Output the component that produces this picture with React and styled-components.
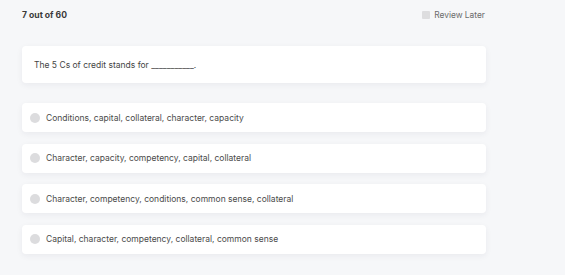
import React from "react";
import styled, { createGlobalStyle } from "styled-components";

const Global = createGlobalStyle`
  html, body { margin: 0; padding: 0; background: #f6f7f9; }
  body { font-family: Inter, "Noto Sans", Arial, sans-serif; -webkit-font-smoothing: antialiased; }
`;

const Page = styled.div`
  width: 464px;
  padding: 10px 0 20px 22px;
  display: flex;
  flex-direction: column;
`;

const Header = styled.div`
  display: flex;
  justify-content: space-between;
  align-items: center;
  height: 10px;
`;

const Count = styled.div`
  font-size: 8.6px;
  font-weight: 700;
  color: #3a3a3a;
`;

const Review = styled.label`
  display: flex;
  align-items: center;
  gap: 4px;
  font-size: 8.4px;
  color: #6b6b6b;
  margin-right: 1px;
`;

const Box = styled.span`
  width: 8px;
  height: 8px;
  background: #dddddf;
  border-radius: 1px;
`;

const Card = styled.div`
  background: #ffffff;
  border-radius: 4px;
  box-shadow: 0 2px 6px rgba(30, 40, 60, 0.06);
  display: flex;
  align-items: center;
`;

const Question = styled(Card)`
  margin-top: 26px;
  height: 37px;
  padding-left: 12px;
  font-size: 8.5px;
  color: #444;
`;

const Options = styled.div`
  margin-top: 20px;
  display: flex;
  flex-direction: column;
  gap: 11.6px;
`;

const Option = styled(Card)`
  height: 29px;
  padding-left: 8px;
  gap: 6px;
  font-size: 8.5px;
  color: #4a4a4a;
`;

const Radio = styled.span`
  width: 10px;
  height: 10px;
  border-radius: 50%;
  background: #dcdcde;
  flex-shrink: 0;
`;

const options = [
  "Conditions, capital, collateral, character, capacity",
  "Character, capacity, competency, capital, collateral",
  "Character, competency, conditions, common sense, collateral",
  "Capital, character, competency, collateral, common sense",
];

export default function App() {
  return (
    <>
      <Global />
      <Page>
        <Header>
          <Count>7 out of 60</Count>
          <Review>
            <Box />
            Review Later
          </Review>
        </Header>
        <Question>The 5 Cs of credit stands for ___________.</Question>
        <Options>
          {options.map((o) => (
            <Option key={o}>
              <Radio />
              {o}
            </Option>
          ))}
        </Options>
      </Page>
    </>
  );
}
